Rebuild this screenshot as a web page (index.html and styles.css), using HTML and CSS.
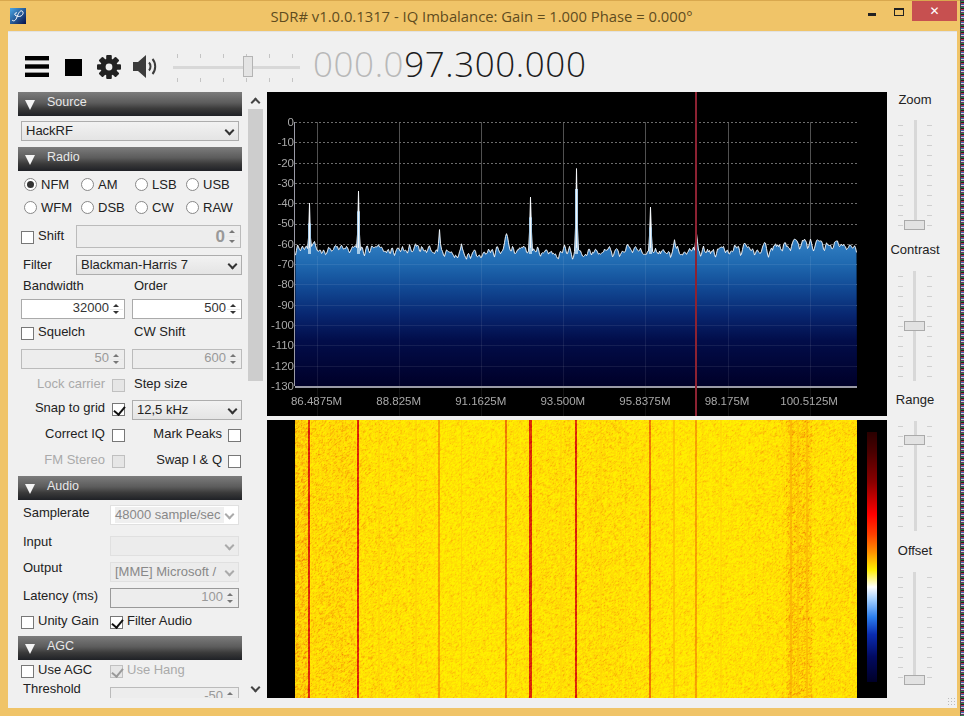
FILE: index.html
```html
<!DOCTYPE html>
<html lang="en">
<head>
<meta charset="utf-8">
<title>SDR#</title>
<link rel="stylesheet" href="styles.css">
</head>
<body>
<div class="screen">
  <div class="window">
    <header class="titlebar">
      <svg class="logo" viewBox="0 0 16 16" aria-hidden="true">
        <defs><linearGradient id="lg" x1="0" y1="0" x2="1" y2="1"><stop offset="0" stop-color="#4aa8e8"/><stop offset="1" stop-color="#04104a"/></linearGradient></defs>
        <rect width="16" height="16" fill="url(#lg)"/>
        <path d="M2 12c2 2 4 0 5-3s3-7 5-6 1 4-1 5-5 0-6-1 1-3 2-2" fill="none" stroke="#fff" stroke-width="1"/>
      </svg>
      <div class="title">SDR# v1.0.0.1317 - IQ Imbalance: Gain = 1.000 Phase = 0.000°</div>
      <div class="caption">
        <span class="cap-min"></span>
        <span class="cap-max"></span>
        <span class="cap-close">✕</span>
      </div>
    </header>
    <div class="client">
      <div class="toolbar">
        <svg class="ico-menu" viewBox="0 0 24 21" aria-hidden="true"><rect width="24" height="4.4" y="0"/><rect width="24" height="4.4" y="8.3"/><rect width="24" height="4.4" y="16.6"/></svg>
        <span class="ico-stop"></span>
        <svg class="ico-gear" viewBox="0 0 24 24" aria-hidden="true">
          <g><rect x="9.2" y="0" width="5.6" height="24" rx="1"/><rect x="9.2" y="0" width="5.6" height="24" rx="1" transform="rotate(45 12 12)"/><rect x="9.2" y="0" width="5.6" height="24" rx="1" transform="rotate(90 12 12)"/><rect x="9.2" y="0" width="5.6" height="24" rx="1" transform="rotate(135 12 12)"/></g>
          <circle cx="12" cy="12" r="8.6"/><circle cx="12" cy="12" r="3.4" fill="#f0f0f0"/>
        </svg>
        <svg class="ico-speaker" viewBox="0 0 25 23" aria-hidden="true">
          <path d="M0 7h5L13 0v23L5 16H0z" fill="#3c3c3c"/>
          <path d="M16 7.5c2 2 2 6 0 8" fill="none" stroke="#3c3c3c" stroke-width="2"/>
          <path d="M19.5 4c3.6 4 3.6 11 0 15" fill="none" stroke="#3c3c3c" stroke-width="2"/>
        </svg>
        <div class="hslider"><span class="hthumb"></span></div>
        <div class="freq"><span class="freq-dim">000.0</span>97.300.000</div>
      </div>
      <div class="main">
        <aside class="side">
          <div class="hdr"><i class="tri"></i>Source</div>
          <div class="row r-src"><div class="combo wide"><span>HackRF</span></div></div>
          <div class="hdr m6"><i class="tri"></i>Radio</div>
          <div class="radios first">
            <label class="opt"><i class="rd on"></i>NFM</label><label class="opt"><i class="rd"></i>AM</label><label class="opt"><i class="rd"></i>LSB</label><label class="opt"><i class="rd"></i>USB</label>
          </div>
          <div class="radios">
            <label class="opt"><i class="rd"></i>WFM</label><label class="opt"><i class="rd"></i>DSB</label><label class="opt"><i class="rd"></i>CW</label><label class="opt"><i class="rd"></i>RAW</label>
          </div>
          <div class="row r-shift"><label class="chk shift-l"><i class="cb"></i>Shift</label><div class="field dis bigval shift-f"><span>0</span><i class="spin"></i></div></div>
          <div class="row r-filter"><span class="lbl filter-l">Filter</span><div class="combo filter-c"><span>Blackman-Harris 7</span></div></div>
          <div class="cols r-lab"><span class="lbl">Bandwidth</span><span class="lbl c2">Order</span></div>
          <div class="cols r-inp"><div class="field"><span>32000</span><i class="spin"></i></div><div class="field"><span>500</span><i class="spin"></i></div></div>
          <div class="cols r-sq"><label class="chk"><i class="cb"></i>Squelch</label><span class="lbl c2">CW Shift</span></div>
          <div class="cols r-dis"><div class="field dis"><span>50</span><i class="spin"></i></div><div class="field dis"><span>600</span><i class="spin"></i></div></div>
          <div class="cols r-lock"><label class="chk end dim">Lock carrier<i class="cb dis"></i></label><span class="lbl c2">Step size</span></div>
          <div class="cols r-snap"><label class="chk end up">Snap to grid<i class="cb on"></i></label><div class="combo"><span>12,5 kHz</span></div></div>
          <div class="cols r-iq"><label class="chk end">Correct IQ<i class="cb"></i></label><label class="chk end inset">Mark Peaks<i class="cb"></i></label></div>
          <div class="cols r-fm"><label class="chk end dim">FM Stereo<i class="cb dis"></i></label><label class="chk end inset">Swap I &amp; Q<i class="cb"></i></label></div>
          <div class="hdr m6"><i class="tri"></i>Audio</div>
          <div class="row r-rate"><span class="lbl a-l up">Samplerate</span><div class="combo a-c off white"><span class="sel">48000 sample/sec</span></div></div>
          <div class="row r-input"><span class="lbl a-l up2">Input</span><div class="combo a-c off"><span></span></div></div>
          <div class="row r-out"><span class="lbl a-l up2">Output</span><div class="combo a-c off"><span>[MME] Microsoft /</span></div></div>
          <div class="row r-lat"><span class="lbl a-l up">Latency (ms)</span><div class="field dis a-c dark-b"><span>100</span><i class="spin"></i></div></div>
          <div class="cols r-un"><label class="chk"><i class="cb"></i>Unity Gain</label><label class="chk f-a"><i class="cb on"></i>Filter Audio</label></div>
          <div class="hdr m5"><i class="tri"></i>AGC</div>
          <div class="cols r-agc"><label class="chk"><i class="cb"></i>Use AGC</label><label class="chk f-a dim"><i class="cb on dis"></i>Use Hang</label></div>
          <div class="row r-th"><span class="lbl a-l th-l">Threshold</span><div class="field dis a-c th-f"><span>-50</span><i class="spin"></i></div></div>
        </aside>
        <div class="vscroll"><i class="chev up-c"></i><div class="vtrack"><div class="vthumb"></div></div><i class="chev"></i></div>
        <div class="plots">
          <div class="spectrum">
            <canvas id="spec" width="620" height="324"></canvas>
            <div class="yaxis">
              <span>0</span><span>-10</span><span>-20</span><span>-30</span><span>-40</span><span>-50</span><span>-60</span><span>-70</span><span>-80</span><span>-90</span><span>-100</span><span>-110</span><span>-120</span><span>-130</span>
            </div>
            <div class="xaxis">
              <span>86.4875M</span><span>88.825M</span><span>91.1625M</span><span>93.500M</span><span>95.8375M</span><span>98.175M</span><span>100.5125M</span>
            </div>
          </div>
          <div class="waterfall">
            <canvas id="fall" width="562" height="278"></canvas>
            <div class="colorbar"></div>
          </div>
        </div>
        <aside class="tuners">
          <div class="tuner t-zoom"><div class="tname">Zoom</div><div class="vslider"><span class="vth th-zoom"></span></div></div>
          <div class="tuner t-con"><div class="tname">Contrast</div><div class="vslider"><span class="vth th-con"></span></div></div>
          <div class="tuner t-ran"><div class="tname">Range</div><div class="vslider"><span class="vth th-ran"></span></div></div>
          <div class="tuner t-off"><div class="tname">Offset</div><div class="vslider"><span class="vth th-off"></span></div></div>
        </aside>
      </div>
      <div class="grip"></div>
    </div>
  </div>
  <div class="desk"></div>
</div>
<script src="script.js"></script>
</body>
</html>
```

FILE: styles.css
```css
* { box-sizing: border-box; }
html, body { margin: 0; padding: 0; height: 716px; overflow: hidden; background: #f0c468; }
body { font-family: "Liberation Sans", Arial, sans-serif; font-size: 13px; color: #222; }
.screen { display: flex; width: 964px; height: 716px; overflow: hidden; }
.window { width: 960px; height: 716px; background: #f0c468; border-top: 1px solid #d9a84e; display: flex; flex-direction: column; }
.desk { width: 4px; height: 716px; border-left: 1px solid #444;
  background: repeating-linear-gradient(180deg, #6a2a6a 0 1px, #2e8a4a 1px 2px, #222 2px 3px, #b03a50 3px 4px, #3a5ab0 4px 5px, #d0d0d0 5px 6px); }

.titlebar { height: 30px; display: flex; align-items: flex-start; position: relative; flex: none; }
.logo { width: 16px; height: 16px; margin: 7px 0 0 10px; flex: none; }
.title { position: absolute; left: 0; right: 0; top: 5px; text-align: center; font: 14.8px/20px "Open Sans", sans-serif; color: #5f4c1e; padding-left: 3px; }
.caption { margin-left: auto; margin-right: 3px; display: flex; align-items: flex-start; position: relative; }
.cap-min { width: 8px; height: 3px; background: #222; margin-top: 12px; }
.cap-max { width: 10px; height: 8px; border: 1px solid #222; border-top-width: 2px; margin: 7px 8px 0 18px; }
.cap-close { width: 45px; height: 20px; background: #c75050; color: #fff; text-align: center; font: 12px/20px "DejaVu Sans", sans-serif; }

.client { position: relative; margin: 0 3px 0 8px; flex: none; width: 949px; height: 677px; background: #f0f0f0; border-top: 1px solid #e2e2e2; }
.toolbar { height: 60px; display: flex; align-items: flex-start; position: relative; }
.ico-menu { width: 24px; height: 21px; margin: 24px 0 0 17px; fill: #000; }
.ico-stop { width: 17px; height: 17px; background: #000; margin: 27px 0 0 16px; }
.ico-gear { width: 24px; height: 24px; margin: 23px 0 0 15px; fill: #222; }
.ico-speaker { width: 25px; height: 23px; margin: 23px 0 0 12px; }
.hslider { width: 127px; height: 28px; margin: 22px 0 0 15px; position: relative;
  background:
    linear-gradient(#d8d8d8,#d8d8d8) 0 12px/100% 3px no-repeat,
    repeating-linear-gradient(90deg, #c4c4c4 0 1px, transparent 1px 23px) 4px 0/100% 4px no-repeat,
    repeating-linear-gradient(90deg, #c4c4c4 0 1px, transparent 1px 23px) 4px 24px/100% 4px no-repeat; }
.hthumb { position: absolute; left: 70px; top: 2px; width: 10px; height: 21px; background: #e4e4e4; border: 1px solid #b4b4b4; }
.freq { margin: 10px 0 0 13px; font: 300 35px/44px "Open Sans", sans-serif; letter-spacing: .58px; color: #1c1c1c; white-space: nowrap; }
.freq-dim { color: #b8b8b8; }

.main { display: flex; height: 606px; padding-left: 10px; }
.side { width: 224px; height: 606px; overflow: hidden; flex: none; display: flex; flex-direction: column; }
.hdr { flex: none; height: 24px; line-height: 20px; padding-left: 29px; color: #e8e8e8; font-size: 12.5px; position: relative;
  background: linear-gradient(180deg, #7c7c7c 0, #5c5c5c 45%, #3a3a3a 70%, #1f2126 100%); }
.hdr.m6 { margin-top: 6px; }
.hdr.m5 { margin-top: 5px; }
.tri { position: absolute; left: 7px; top: 8px; width: 0; height: 0; border-left: 5px solid transparent; border-right: 5px solid transparent; border-top: 10px solid #f4f4f4; }

.row { flex: none; display: flex; align-items: center; height: 20px; }
.cols { flex: none; display: grid; grid-template-columns: 104px 110px; column-gap: 7px; padding-left: 3px; height: 20px; align-items: center; }
.lbl, .chk, .opt { white-space: nowrap; line-height: 16px; }
.c2 { padding-left: 2px; }

.radios { flex: none; height: 23px; display: grid; grid-template-columns: 57px 54px 51px auto; padding-left: 6px; align-items: center; }
.radios.first { margin-top: 2px; }
.opt { display: flex; align-items: center; gap: 4px; }
.rd { width: 13px; height: 13px; border-radius: 50%; border: 1px solid #888; background: #fff; display: block; flex: none; position: relative; }
.rd.on::after { content: ""; position: absolute; left: 2px; top: 2px; width: 7px; height: 7px; border-radius: 50%; background: #333; }

.chk { display: flex; align-items: center; gap: 4px; }
.chk.end { justify-content: flex-end; gap: 7px; }
.chk.end.inset { padding-right: 1px; gap: 6px; }
.chk.dim, .dim { color: #aaa; }
.cb { width: 13px; height: 13px; border: 1px solid #777; background: #fff; display: block; flex: none; position: relative; margin-top: 3px; }
.cb.dis { background: #e6e6e6; border-color: #c0c0c0; }
.cb.on::after { content: ""; position: absolute; left: 3px; top: 0; width: 5px; height: 9px; border: solid #111; border-width: 0 2px 2px 0; transform: rotate(40deg); }
.cb.on.dis::after { border-color: #999; }

.combo { height: 20px; position: relative; border: 1px solid #adadad; background: linear-gradient(#f2f2f2, #e4e4e4); line-height: 18px; padding-left: 4px; white-space: nowrap; overflow: hidden; }
.combo::after { content: ""; position: absolute; right: 5px; top: 5px; width: 5px; height: 5px; border: solid #333; border-width: 0 2px 2px 0; transform: rotate(45deg); }
.combo.off { background: #ececec; border-color: #e0e0e0; color: #888; }
.combo.off::after { border-color: #aaa; }
.combo.white { background: #fff; }
.sel { background: #efefef; display: inline-block; line-height: 16px; padding-right: 3px; }

.field { height: 20px; position: relative; border: 1px solid #aaa; background: #fff; text-align: right; padding-right: 15px; line-height: 16px; color: #333; }
.field.dis { background: #ededed; border-color: #bbb; color: #999; }
.field.dark-b { border-color: #999; }
.spin { position: absolute; right: 1px; top: 1px; bottom: 1px; width: 13px;
  background:
    linear-gradient(#e9e9e9, #e9e9e9) 0 50%/100% 1px no-repeat; }
.spin::before, .spin::after { content: ""; position: absolute; left: 3px; width: 0; height: 0; border-left: 3px solid transparent; border-right: 3px solid transparent; }
.spin::before { top: 3px; border-bottom: 3px solid #333; }
.spin::after { bottom: 3px; border-top: 3px solid #333; }
.dis .spin::before { border-bottom-color: #777; }
.dis .spin::after { border-top-color: #777; }

.r-src { margin-top: 5px; padding-left: 3px; }
.wide { width: 218px; }
.r-shift { margin-top: 6px; height: 23px; padding-left: 3px; }
.shift-l { width: 55px; position: relative; top: -1px; }
.shift-f { width: 165px; height: 23px; }
.bigval span { font-weight: bold; font-size: 17px; line-height: 21px; color: #999; }
.r-filter { margin-top: 7px; }
.filter-l { width: 58px; padding-left: 5px; }
.filter-c { width: 166px; }
.r-lab { margin-top: 1px; }
.r-lab .lbl:first-child { padding-left: 2px; }
.r-inp { margin-top: 3px; }
.r-sq { margin-top: 3px; }
.r-dis { margin-top: 7px; }
.r-lock { margin-top: 5px; }
.r-snap { margin-top: 6px; }
.up { position: relative; top: -2px; }
.r-iq { margin-top: 4px; }
.r-fm { margin-top: 6px; }
.r-rate { margin-top: 5px; }
.a-l { width: 92px; padding-left: 5px; }
.a-c { width: 129px; }
.up2 { position: relative; top: -4px; }
.r-input { margin-top: 11px; }
.r-out { margin-top: 6px; }
.r-lat { margin-top: 6px; }
.r-un { margin-top: 3px; }
.f-a { margin-left: -22px; }
.r-agc { height: 19px; }
.r-th { margin-top: 8px; align-items: flex-start; }
.th-l { line-height: 14px; margin-top: -5px; }

.vscroll { width: 15px; margin-left: 6px; flex: none; display: flex; flex-direction: column; align-items: center; }
.chev { width: 7px; height: 7px; border: solid #444; border-width: 0 2px 2px 0; transform: rotate(45deg); margin-top: 2px; flex: none; }
.chev.up-c { transform: rotate(225deg); margin-top: 7px; margin-bottom: 2px; }
.vtrack { width: 15px; height: 571px; margin: 1px 0 2px; flex: none; }
.vthumb { height: 272px; background: #cdcdcd; }

.plots { width: 620px; margin-left: 4px; flex: none; display: flex; flex-direction: column; gap: 4px; }
.spectrum { position: relative; height: 324px; background: #000; flex: none; }
.spectrum canvas, .waterfall canvas { display: block; }
.yaxis { position: absolute; left: 0; top: 30px; width: 27px; display: flex; flex-direction: column; text-align: right; font-size: 11.5px; color: #a8a8a8; }
.yaxis span { height: 20.3px; line-height: 0; }
.xaxis { position: absolute; left: 0; top: 302px; height: 14px; width: 100%; font-size: 11.5px; line-height: 14px; color: #a8a8a8; display: grid; grid-template-columns: repeat(7, 82.1px); padding-left: 8.5px; }
.xaxis span { text-align: center; }
.waterfall { height: 278px; background: #000; padding-left: 28px; position: relative; flex: none; display: flex; }
.colorbar { width: 10px; height: 250px; margin: 12px 0 0 10px;
  background: linear-gradient(180deg, #2a0000 0, #4a0000 8%, #8a0000 20%, #ff0000 33%, #ff4000 41%, #ff9000 48%, #ffee00 55%, #ffffff 62%, #a4d0ff 67%, #2d7fee 74%, #0a2cb0 81%, #020a60 90%, #000028 100%); }

.tuners { width: 56px; flex: none; display: flex; flex-direction: column; align-items: center; position: relative; }
.tuner { display: flex; flex-direction: column; align-items: center; flex: none; }
.tname { height: 16px; line-height: 16px; white-space: nowrap; }
.t-zoom .tname { height: 15px; }
.t-zoom { height: 150px; }
.t-con { height: 150px; }
.t-ran { height: 151px; }
.t-off { height: 140px; }
.vslider { width: 34px; height: 110px; position: relative; margin-top: 13px;
  background:
    linear-gradient(#d8d8d8,#d8d8d8) 50% 0/3px 100% no-repeat,
    repeating-linear-gradient(180deg, #d0d0d0 0 1px, transparent 1px 10px) 0 5px/5px 100% no-repeat,
    repeating-linear-gradient(180deg, #d0d0d0 0 1px, transparent 1px 10px) 29px 5px/5px 100% no-repeat; }
.vth { position: absolute; left: 6px; width: 21px; height: 10px; background: #e2e2e2; border: 1px solid #aaa; }
.th-zoom { top: 100px; }
.th-con { top: 50px; }
.th-ran { top: 14px; }
.th-off { top: 103px; }
.grip { position: absolute; right: 1px; bottom: 2px; width: 9px; height: 9px;
  background: radial-gradient(circle, #bbb 0 1px, transparent 1px) 0 0/3px 3px; }
```

FILE: script.js
```js
(function () {
  var seed = 12345;
  function rnd() { seed = (seed * 1664525 + 1013904223) % 4294967296; return seed / 4294967296; }

  var OX = 28, OY = 30, W = 562, DB = 20.3;
  var peaks = [
    { x: 309, db: -40, w: 0.9 }, { x: 358, db: -34, w: 0.9 }, { x: 439, db: -53, w: 1.0 },
    { x: 461, db: -60, w: 1.0 }, { x: 506, db: -55, w: 2.4 }, { x: 530, db: -37, w: 1.0 },
    { x: 576, db: -23, w: 0.9 }, { x: 650, db: -42, w: 1.0 }, { x: 674, db: -58, w: 1.2 },
    { x: 696, db: -55, w: 1.3 }, { x: 415, db: -60, w: 1.6 }
  ];

  var raw = [];
  for (var r = 0; r < W + 3; r++) raw.push(rnd() - 0.5);
  var curve = [];
  for (var i = 0; i < W; i++) {
    var px = 295 + i;
    var base = -64 + (i > 420 ? 1 : 0);
    if (px < 440) base += (440 - px) / 90;
    if (px > 770) base += 2.6 * Math.exp(-Math.pow((px - 802) / 16, 2)) + 1;
    var n = (raw[i] + raw[i + 1] * 1.4 + raw[i + 2]) / 1.6;
    var v = base + n * 4.6;
    peaks.forEach(function (p) {
      var d = Math.abs(px - p.x);
      if (d < p.w * 2.5) v = Math.max(v, -64 + (p.db + 64) * Math.exp(-Math.pow(d / p.w, 2)));
    });
    curve.push(v);
  }
  function yOf(db) { return OY + (-db) * DB / 10; }

  var s = document.getElementById('spec').getContext('2d');
  s.fillStyle = '#000';
  s.fillRect(0, 0, 620, 324);

  // grid under the trace
  s.strokeStyle = '#505050';
  s.lineWidth = 1;
  for (var g = 0; g < 7; g++) {
    var gx = Math.round(50 + g * 82.1) + 0.5;
    s.beginPath(); s.moveTo(gx, OY); s.lineTo(gx, OY + 264); s.stroke();
  }
  s.strokeStyle = '#6c6c6c';
  s.setLineDash([2, 2]);
  for (var d = 0; d < 13; d++) {
    var gy = Math.round(OY + d * DB) + 0.5;
    s.beginPath(); s.moveTo(OX, gy); s.lineTo(OX + W, gy); s.stroke();
  }
  s.setLineDash([]);

  // filled trace
  var grad = s.createLinearGradient(0, yOf(-60), 0, yOf(-130));
  grad.addColorStop(0, '#2f7cc0');
  grad.addColorStop(0.14, '#1f69b0');
  grad.addColorStop(0.3, '#124b96');
  grad.addColorStop(0.5, '#082670');
  grad.addColorStop(0.68, '#020d4a');
  grad.addColorStop(1, '#000028');
  s.beginPath();
  s.moveTo(OX, yOf(-130));
  curve.forEach(function (v, i) { s.lineTo(OX + i + 0.5, yOf(v)); });
  s.lineTo(OX + W, yOf(-130));
  s.closePath();
  s.fillStyle = grad;
  s.fill();

  // grid showing through the fill
  s.fillStyle = 'rgba(255,255,255,.08)';
  for (var k = 7; k < 13; k++) s.fillRect(OX, Math.round(OY + k * DB), W, 1);
  for (g = 0; g < 7; g++) s.fillRect(Math.round(50 + g * 82.1), yOf(-66), 1, 195);

  s.beginPath();
  curve.forEach(function (v, i) { if (i) s.lineTo(OX + i + 0.5, yOf(v)); else s.moveTo(OX + 0.5, yOf(v)); });
  s.strokeStyle = '#eef3f8';
  s.lineWidth = 1;
  s.stroke();

  // strong carriers: pale shoulder with a thin white tip
  peaks.forEach(function (p) {
    if (p.db > -50) {
      var c = p.x - 295 + OX;
      s.fillStyle = '#a9cde9';
      s.fillRect(c - 1, yOf(p.db - 10), 3, yOf(-65) - yOf(p.db - 10));
      s.fillStyle = '#f4f6f8';
      s.fillRect(c, yOf(p.db), 1, yOf(-62) - yOf(p.db));
    }
  });

  // axes
  s.fillStyle = '#9a9aa6';
  s.fillRect(OX, OY + 264, W, 2);
  s.fillRect(OX - 1, OY, 1, 264);
  // tuned frequency
  s.fillStyle = '#8c2232';
  s.fillRect(428, 0, 2, 324);

  // waterfall
  var f = document.getElementById('fall').getContext('2d');
  var img = f.createImageData(562, 278);
  var lines = {};
  function mark(x, a, w) { for (var q = 0; q < w; q++) lines[x - 295 + q] = a; }
  mark(308, 1, 2); mark(357, 1, 2); mark(438, .62, 2); mark(505, .74, 2); mark(529, 1, 3);
  mark(575, 1, 2); mark(649, .76, 2); mark(673, .42, 2); mark(695, .62, 2); mark(461, .34, 1);
  mark(415, .3, 2); mark(600, .28, 2); mark(560, .28, 2); mark(790, .5, 2); mark(797, .4, 2);
  mark(806, .46, 2); mark(378, .28, 2); mark(720, .26, 2); mark(336, .26, 1); mark(625, .26, 1);

  var colBase = [];
  for (var c = 0; c < 562; c++) {
    var x2 = c + 295, b = 0.15 + rnd() * 0.05;
    if (x2 < 310) b += 0.16;
    if (x2 > 310 && x2 < 356) b += 0.06;
    if (x2 > 785 && x2 < 812) b += 0.13;
    colBase.push(b + 0.035 * Math.sin(c / 37));
  }
  var grain = new Float32Array(563 * 279);
  for (i = 0; i < grain.length; i++) grain[i] = rnd();
  function color(v) {
    var st = [[0, 255, 240, 0], [.3, 255, 214, 6], [.55, 248, 168, 4], [.8, 232, 84, 4], [1, 214, 10, 10]];
    v = Math.max(0, Math.min(1, v));
    for (var n = 1; n < st.length; n++) {
      if (v <= st[n][0]) {
        var t = (v - st[n - 1][0]) / (st[n][0] - st[n - 1][0]);
        return [0, 1, 2].map(function (ci) { return st[n - 1][ci + 1] + t * (st[n][ci + 1] - st[n - 1][ci + 1]); });
      }
    }
    return [214, 10, 10];
  }
  for (var y = 0; y < 278; y++) {
    for (var x = 0; x < 562; x++) {
      var g0 = (grain[y * 563 + x] + grain[y * 563 + x + 1] + grain[(y + 1) * 563 + x]) / 3 - 0.5;
      var val = colBase[x] + g0 * 0.7;
      if (lines[x]) val = Math.max(val, lines[x] * (0.92 + g0 * 0.2));
      var col = color(val), o = (y * 562 + x) * 4;
      img.data[o] = col[0]; img.data[o + 1] = col[1]; img.data[o + 2] = col[2]; img.data[o + 3] = 255;
    }
  }
  f.putImageData(img, 0, 0);
})();
```
